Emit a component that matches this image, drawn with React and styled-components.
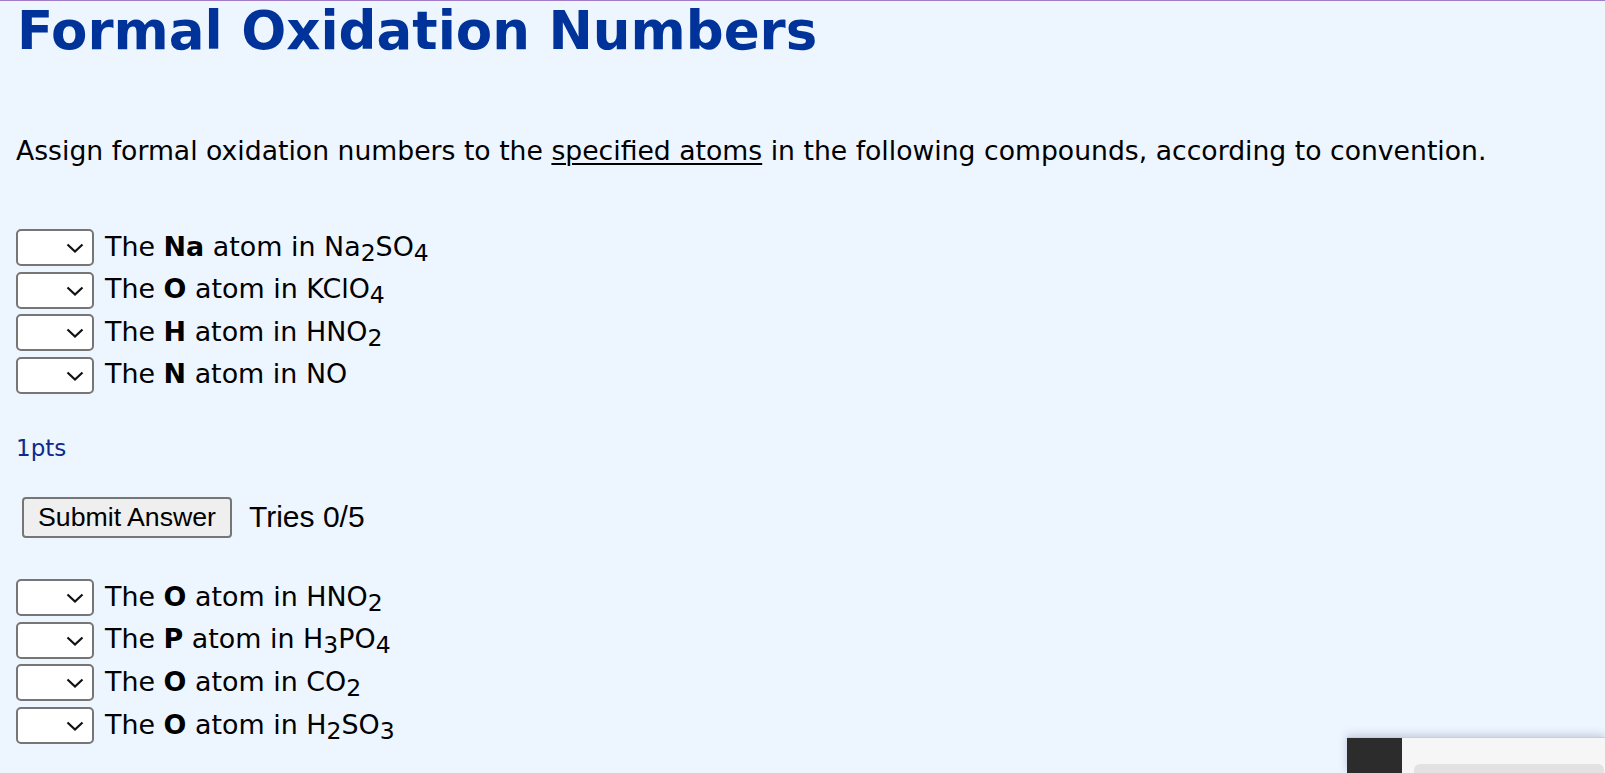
import React from "react";
import styled, { createGlobalStyle } from "styled-components";

const GlobalStyle = createGlobalStyle`
  html, body {
    margin: 0;
    padding: 0;
    overflow: hidden;
    background: #edf5ff;
  }
  body {
    font-family: "DejaVu Sans", Verdana, sans-serif;
    color: #000;
  }
`;

const Page = styled.div`
  min-height: 773px;
  box-sizing: border-box;
  border-top: 1px solid #a17ccb;
  padding: 0 16px;
`;

const Title = styled.h1`
  margin: 0 0 0 1px;
  font-family: "DejaVu Sans", Verdana, sans-serif;
  font-weight: bold;
  font-size: 53px;
  line-height: 60px;
  color: #003399;
`;

const Intro = styled.p`
  margin: 74px 0 0;
  font-size: 26.67px;
  line-height: 31px;

  u {
    text-decoration-thickness: 2px;
    text-underline-offset: 3px;
  }
`;

const Questions = styled.div`
  display: flex;
  flex-direction: column;
  gap: 5.6px;
  margin-top: ${(p) => p.$top}px;
`;

const Row = styled.div`
  display: flex;
  align-items: center;
  gap: 11px;
  height: 37px;
`;

const SelectWrap = styled.div`
  position: relative;
  width: 78px;
  height: 37px;
  flex: none;
`;

const Select = styled.select`
  appearance: none;
  width: 100%;
  height: 100%;
  box-sizing: border-box;
  border: 2px solid #767676;
  border-radius: 5px;
  background: #fff;
  margin: 0;
`;

const Chevron = styled.svg`
  position: absolute;
  right: 10px;
  top: 14px;
  width: 18px;
  height: 10px;
  pointer-events: none;
`;

const Label = styled.span`
  font-size: 26.9px;
  line-height: 33px;
  padding-bottom: 3px;
  white-space: nowrap;

  b {
    font-weight: bold;
  }

  sub {
    font-size: 23.5px;
    line-height: 0;
    vertical-align: -5px;
  }
`;

const Points = styled.div`
  margin-top: 41px;
  font-size: 23px;
  line-height: 26px;
  color: #0f2a8c;
`;

const SubmitRow = styled.div`
  display: flex;
  align-items: center;
  gap: 17px;
  margin: 36px 0 0 6px;
`;

const Button = styled.button`
  height: 41px;
  box-sizing: border-box;
  padding: 0 14px;
  border: 2px solid #767676;
  border-radius: 4px;
  background: #efefef;
  font-family: "Liberation Sans", Arial, sans-serif;
  font-size: 26.7px;
  color: #000;
`;

const Tries = styled.span`
  font-family: "Liberation Sans", Arial, sans-serif;
  font-size: 30px;
`;

const Flyout = styled.div`
  position: fixed;
  left: 1347px;
  top: 737px;
  right: 0;
  bottom: 0;
  display: flex;
  box-shadow: 0 -2px 8px rgba(60, 80, 110, 0.25);
  border-top: 1px solid #c9d0da;
`;

const FlyoutRail = styled.div`
  width: 55px;
  background: #2c2c2c;
`;

const FlyoutBody = styled.div`
  flex: 1;
  background: #f6f6f6;
  padding: 25px 1px 0 12px;
`;

const SearchField = styled.div`
  display: flex;
  align-items: flex-start;
  gap: 6px;
  height: 34px;
  padding: 6px 8px 0;
  border-radius: 6px;
  background: #e2e2e2;
  font-family: "Noto Sans CJK SC", sans-serif;
  font-size: 14px;
  line-height: 20px;
  color: #6a6a6a;
  margin-top: 1px;
  box-sizing: border-box;

  svg {
    margin-top: 4px;
  }
`;

function Dropdown() {
  return (
    <SelectWrap>
      <Select aria-label="oxidation number">
        <option value=""></option>
      </Select>
      <Chevron viewBox="0 0 18 10">
        <path d="M1.5 1.5 L9 8.5 L16.5 1.5" fill="none" stroke="#111" strokeWidth="2.2" />
      </Chevron>
    </SelectWrap>
  );
}

function Formula({ parts }) {
  return parts.map((p, i) =>
    /^\d+$/.test(p) ? <sub key={i}>{p}</sub> : <React.Fragment key={i}>{p}</React.Fragment>
  );
}

const firstSet = [
  ["Na", ["Na", "2", "SO", "4"]],
  ["O", ["KClO", "4"]],
  ["H", ["HNO", "2"]],
  ["N", ["NO"]],
];

const secondSet = [
  ["O", ["HNO", "2"]],
  ["P", ["H", "3", "PO", "4"]],
  ["O", ["CO", "2"]],
  ["O", ["H", "2", "SO", "3"]],
];

function QuestionList({ items, top }) {
  return (
    <Questions $top={top}>
      {items.map(([atom, formula], i) => (
        <Row key={i}>
          <Dropdown />
          <Label>
            The <b>{atom}</b> atom in <Formula parts={formula} />
          </Label>
        </Row>
      ))}
    </Questions>
  );
}

export default function App() {
  return (
    <>
      <GlobalStyle />
      <Page>
        <Title>Formal Oxidation Numbers</Title>
        <Intro>
          Assign formal oxidation numbers to the <u>specified atoms</u> in the following
          compounds, according to convention.
        </Intro>
        <QuestionList items={firstSet} top={63} />
        <Points>1pts</Points>
        <SubmitRow>
          <Button>Submit Answer</Button>
          <Tries>Tries 0/5</Tries>
        </SubmitRow>
        <QuestionList items={secondSet} top={41.5} />
      </Page>
      <Flyout>
        <FlyoutRail />
        <FlyoutBody>
          <SearchField>
            <svg width="12" height="12" viewBox="0 0 12 12">
              <circle cx="5" cy="5" r="3.8" fill="none" stroke="#555" strokeWidth="1.3" />
              <path d="M8 8 L11 11" stroke="#555" strokeWidth="1.3" />
            </svg>
            搜索
          </SearchField>
        </FlyoutBody>
      </Flyout>
    </>
  );
}
